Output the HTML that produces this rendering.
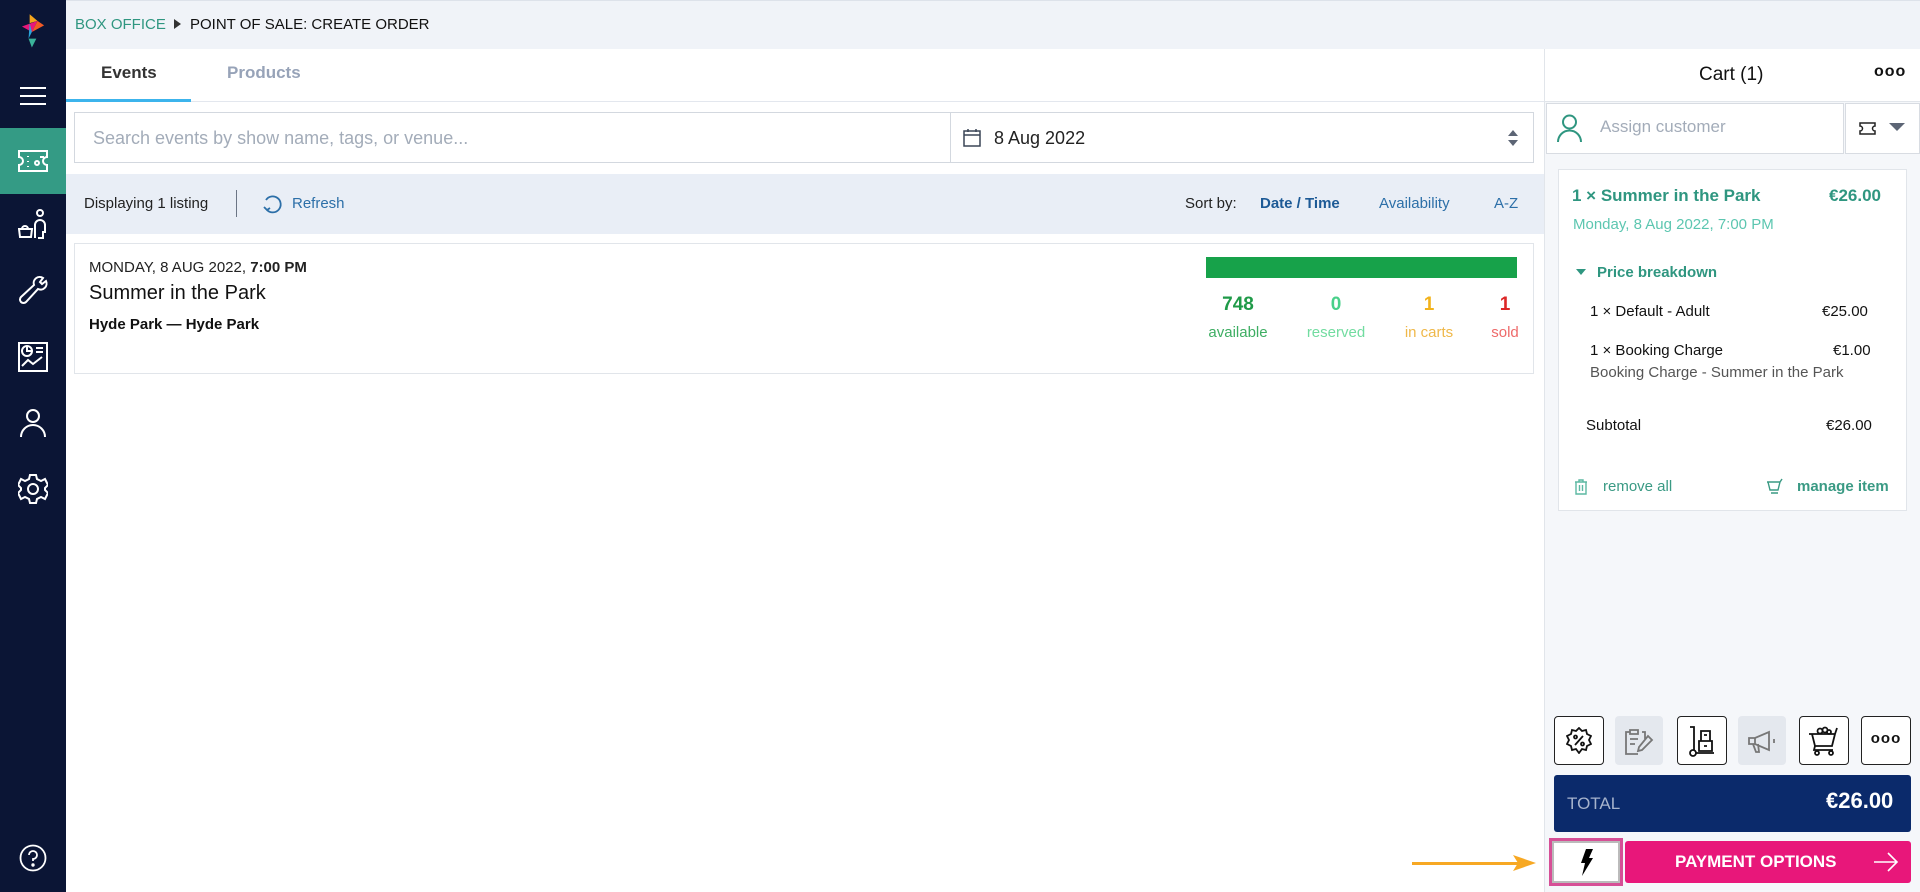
<!DOCTYPE html>
<html><head><meta charset="utf-8"><style>
*{box-sizing:border-box;margin:0;padding:0}
body{width:1920px;height:892px;overflow:hidden;font-family:"Liberation Sans",sans-serif;background:#fff;position:relative;color:#111}
.a{position:absolute}
.sb{left:0;top:0;width:66px;height:892px;background:#0b1535}
.ic{position:absolute;left:18px;width:30px;height:30px}
</style></head><body>
<div class="a sb">
  <svg class="a" style="left:18px;top:12px" width="30" height="40" viewBox="0 0 26 36"><path d="M10 2 L17 8 L10 10Z" fill="#f4a51c"/><path d="M3 13 L17 8 L12 18Z" fill="#e8177a"/><path d="M17 8 L23 12 L12 18Z" fill="#f25a26"/><path d="M10 10 L12 18 L9 24Z" fill="#29a4d9"/><path d="M9 24 L16 24 L12 32Z" fill="#3bb39a"/></svg>
  <svg class="ic" style="top:81px" viewBox="0 0 30 30" stroke="#fff" stroke-width="2"><path d="M2 7H28M2 15H28M2 23H28"/></svg>
  <div class="a" style="left:0;top:128px;width:66px;height:66px;background:#349b85"></div>
  <svg class="ic" style="top:146px" viewBox="0 0 30 30" fill="none" stroke="#fff" stroke-width="2"><path d="M1 5H29V11A4 4 0 0 0 29 19V25H1V19A4 4 0 0 0 1 11Z"/><circle cx="19" cy="17" r="2"/><path d="M10 10V11M10 15V16M10 20V21M22 11H26"/></svg>
  <svg class="ic" style="top:209px" viewBox="0 0 30 30" fill="none" stroke="#fff" stroke-width="2"><circle cx="22" cy="4" r="3"/><path d="M17 29V16A5 5 0 0 1 27 16V23H25V29H20"/><path d="M1 20H14L13 28H2Z M4 20 A3 3 0 0 1 10 20"/></svg>
  <svg class="ic" style="top:275px" viewBox="0 0 30 30" fill="none" stroke="#fff" stroke-width="2"><path d="M3 22 L16 10 A6 6 0 0 1 25 3 L22 7 L24 9 L28 6 A6 6 0 0 1 20 14 L8 27 A3.5 3.5 0 0 1 3 22Z"/></svg>
  <svg class="ic" style="top:342px" viewBox="0 0 30 30" fill="none" stroke="#fff" stroke-width="2"><rect x="1" y="1" width="28" height="28"/><circle cx="9" cy="9" r="5"/><path d="M9 4V9H14M18 6H25M18 10H25M4 24L10 18L15 22L24 15"/></svg>
  <svg class="ic" style="top:408px" viewBox="0 0 30 30" fill="none" stroke="#fff" stroke-width="2"><circle cx="15" cy="8" r="6"/><path d="M3 29A12 12 0 0 1 27 29"/></svg>
  <svg class="ic" style="top:474px" viewBox="0 0 30 30" fill="none" stroke="#fff" stroke-width="2"><circle cx="15" cy="15" r="5"/><path d="M12 1H18L19 5L23 7L27 5L30 11L27 14V16L30 19L27 25L23 23L19 25L18 29H12L11 25L7 23L3 25L0 19L3 16V14L0 11L3 5L7 7L11 5Z"/></svg>
  <svg class="a" style="left:19px;top:844px" width="28" height="28" viewBox="0 0 28 28" fill="none" stroke="#fff" stroke-width="1.8"><circle cx="14" cy="14" r="12.5"/><path d="M10 11A4 4 0 1 1 14 15V17"/><circle cx="14" cy="21" r=".8" fill="#fff"/></svg>
</div>
<div class="a" style="left:66px;top:0;width:1854px;height:49px;background:#f0f3f8;border-top:1px solid #dde2ea"></div>
<div class="a" style="left:75px;top:16px;font-size:15px;color:#2f9680">BOX OFFICE</div>
<div class="a" style="left:174px;top:19px;width:0;height:0;border-left:7px solid #333;border-top:5px solid transparent;border-bottom:5px solid transparent"></div>
<div class="a" style="left:190px;top:16px;font-size:15px;color:#111">POINT OF SALE: CREATE ORDER</div>
<div class="a" style="left:66px;top:101px;width:1478px;height:1px;background:#e3e7ee"></div>
<div class="a" style="left:101px;top:63px;font-size:17px;font-weight:bold;color:#333">Events</div>
<div class="a" style="left:227px;top:63px;font-size:17px;font-weight:bold;color:#97a3b8">Products</div>
<div class="a" style="left:66px;top:99px;width:125px;height:3px;background:#3cb4ec"></div>
<div class="a" style="left:74px;top:112px;width:876px;height:51px;border:1px solid #d3d8df;border-right:none"></div>
<div class="a" style="left:93px;top:128px;font-size:18px;color:#a3acb9">Search events by show name, tags, or venue...</div>
<div class="a" style="left:950px;top:112px;width:584px;height:51px;border:1px solid #d3d8df"></div>
<svg class="a" style="left:963px;top:128px" width="18" height="19" viewBox="0 0 18 19" fill="none" stroke="#3a4556" stroke-width="1.5"><rect x="1" y="3" width="16" height="15"/><path d="M1 7H17M5 1V4M13 1V4"/></svg>
<div class="a" style="left:994px;top:128px;font-size:18px;color:#222">8 Aug 2022</div>
<div class="a" style="left:1508px;top:130px;border-bottom:6px solid #5c6575;border-left:5px solid transparent;border-right:5px solid transparent"></div>
<div class="a" style="left:1508px;top:140px;border-top:6px solid #5c6575;border-left:5px solid transparent;border-right:5px solid transparent"></div>
<div class="a" style="left:66px;top:174px;width:1478px;height:60px;background:#e9eef6"></div>
<div class="a" style="left:84px;top:195px;font-size:15px;color:#222">Displaying 1 listing</div>
<div class="a" style="left:236px;top:190px;width:1px;height:27px;background:#6b7585"></div>
<svg class="a" style="left:263px;top:194px" width="20" height="20" viewBox="0 0 20 20" fill="none" stroke="#2c6fa8" stroke-width="1.8"><path d="M4 16A8 8 0 1 0 3 6"/><path d="M1 13L4 16L7 14"/></svg>
<div class="a" style="left:292px;top:195px;font-size:15px;color:#2c6fa8">Refresh</div>
<div class="a" style="left:1185px;top:195px;font-size:15px;color:#222">Sort by:</div>
<div class="a" style="left:1260px;top:195px;font-size:15px;color:#1d5a96;font-weight:bold">Date / Time</div>
<div class="a" style="left:1379px;top:195px;font-size:15px;color:#2c6fa8">Availability</div>
<div class="a" style="left:1494px;top:195px;font-size:15px;color:#2c6fa8">A-Z</div>
<div class="a" style="left:74px;top:243px;width:1460px;height:131px;border:1px solid #e1e5ea"></div>
<div class="a" style="left:89px;top:259px;font-size:15px;color:#222">MONDAY, 8 AUG 2022, <b>7:00 PM</b></div>
<div class="a" style="left:89px;top:282px;font-size:20px;color:#111">Summer in the Park</div>
<div class="a" style="left:89px;top:316px;font-size:15px;font-weight:bold;color:#111">Hyde Park — Hyde Park</div>
<div class="a" style="left:1206px;top:257px;width:311px;height:21px;background:#17a24a"></div>
<div class="a" style="left:1198px;top:294px;width:80px;text-align:center;font-size:19px;font-weight:bold;color:#1f9a48">748</div>
<div class="a" style="left:1198px;top:324px;width:80px;text-align:center;font-size:15px;color:#3eae63">available</div>
<div class="a" style="left:1296px;top:294px;width:80px;text-align:center;font-size:19px;font-weight:bold;color:#49d08a">0</div>
<div class="a" style="left:1296px;top:324px;width:80px;text-align:center;font-size:15px;color:#72dca0">reserved</div>
<div class="a" style="left:1389px;top:294px;width:80px;text-align:center;font-size:19px;font-weight:bold;color:#f2b21b">1</div>
<div class="a" style="left:1389px;top:324px;width:80px;text-align:center;font-size:15px;color:#efb84a">in carts</div>
<div class="a" style="left:1465px;top:294px;width:80px;text-align:center;font-size:19px;font-weight:bold;color:#dc2727">1</div>
<div class="a" style="left:1465px;top:324px;width:80px;text-align:center;font-size:15px;color:#ee6a6a">sold</div>
<div class="a" style="left:1544px;top:49px;width:376px;height:843px;background:#f5f7fa;border-left:1px solid #e1e5ea"></div>
<div class="a" style="left:1545px;top:49px;width:375px;height:53px;background:#fff;border-bottom:1px solid #e1e5ea"></div>
<div class="a" style="left:1699px;top:64px;font-size:19px;color:#111">Cart (1)</div>
<div class="a" style="left:1874px;top:63px;font-size:16px;letter-spacing:1px;font-weight:bold">ooo</div>
<div class="a" style="left:1546px;top:103px;width:298px;height:51px;background:#fff;border:1px solid #d8dce2"></div>
<svg class="a" style="left:1557px;top:114px" width="25" height="29" viewBox="0 0 25 29" fill="none" stroke="#2f9680" stroke-width="2"><circle cx="12.5" cy="8" r="6.5"/><path d="M1 28A11.5 11.5 0 0 1 24 28"/></svg>
<div class="a" style="left:1600px;top:117px;font-size:17px;color:#a3acb9">Assign customer</div>
<div class="a" style="left:1845px;top:103px;width:75px;height:51px;background:#fff;border:1px solid #d8dce2"></div>
<svg class="a" style="left:1859px;top:122px" width="17" height="13" viewBox="0 0 17 13" fill="none" stroke="#222" stroke-width="1.5"><path d="M1 1H16V4A2.5 2.5 0 0 0 16 9V12H1V9A2.5 2.5 0 0 0 1 4Z"/></svg>
<div class="a" style="left:1889px;top:123px;border-top:8px solid #5c6575;border-left:8px solid transparent;border-right:8px solid transparent"></div>
<div class="a" style="left:1558px;top:169px;width:349px;height:342px;background:#fff;border:1px solid #e1e5ea"></div>
<div class="a" style="left:1572px;top:186px;font-size:17px;font-weight:bold;color:#2f9680">1 × Summer in the Park</div>
<div class="a" style="left:1829px;top:186px;font-size:17px;font-weight:bold;color:#2f9680">€26.00</div>
<div class="a" style="left:1573px;top:216px;font-size:15px;color:#5cc6b0">Monday, 8 Aug 2022, 7:00 PM</div>
<div class="a" style="left:1576px;top:269px;border-top:6px solid #2f9680;border-left:5px solid transparent;border-right:5px solid transparent"></div>
<div class="a" style="left:1597px;top:264px;font-size:15px;font-weight:bold;color:#2f9680">Price breakdown</div>
<div class="a" style="left:1590px;top:303px;font-size:15px;color:#111">1 × Default - Adult</div>
<div class="a" style="left:1822px;top:303px;font-size:15px;color:#111">€25.00</div>
<div class="a" style="left:1590px;top:342px;font-size:15px;color:#111">1 × Booking Charge</div>
<div class="a" style="left:1833px;top:342px;font-size:15px;color:#111">€1.00</div>
<div class="a" style="left:1590px;top:364px;font-size:15px;color:#555">Booking Charge - Summer in the Park</div>
<div class="a" style="left:1586px;top:417px;font-size:15px;color:#111">Subtotal</div>
<div class="a" style="left:1826px;top:417px;font-size:15px;color:#111">€26.00</div>
<svg class="a" style="left:1574px;top:479px" width="14" height="16" viewBox="0 0 14 16" fill="none" stroke="#5cb8a2" stroke-width="1.4"><path d="M1 3H13M5 3V1H9V3M2 3V15H12V3M5.5 6V12M8.5 6V12"/></svg>
<div class="a" style="left:1603px;top:478px;font-size:15px;color:#3a9a84">remove all</div>
<svg class="a" style="left:1766px;top:478px" width="18" height="17" viewBox="0 0 18 17" fill="none" stroke="#3a9a84" stroke-width="1.4"><path d="M1 4H14L16 1M14 4L12 12H4L2 4M5 15H12"/></svg>
<div class="a" style="left:1797px;top:478px;font-size:15px;font-weight:bold;color:#3a9a84">manage item</div>
<div class="a" style="left:1554px;top:716px;width:50px;height:49px;background:#fff;border:1px solid #222;border-radius:4px"></div>
<svg class="a" style="left:1566px;top:727px" width="26" height="27" viewBox="0 0 26 27" fill="none" stroke="#111" stroke-width="1.8"><path d="M13 1L16 4L20 3L21 7L25 9L23 13L25 17L21 19L20 23L16 22L13 26L10 22L6 23L5 19L1 17L3 13L1 9L5 7L6 3L10 4Z"/><circle cx="9.5" cy="10" r="1.5"/><circle cx="16.5" cy="17" r="1.5"/><path d="M17 9L9 18"/></svg>
<div class="a" style="left:1615px;top:716px;width:48px;height:49px;background:#e4e8ee;border-radius:4px"></div>
<svg class="a" style="left:1624px;top:727px" width="30" height="28" viewBox="0 0 30 28" fill="none" stroke="#777" stroke-width="1.8"><path d="M18 5H21V12M14 27H2V5H6M6 3H14V7H6Z M6 12H14M6 17H11M24 9L28 13L18 23L14 24L15 20Z"/></svg>
<div class="a" style="left:1677px;top:716px;width:50px;height:49px;background:#fff;border:1px solid #222;border-radius:4px"></div>
<svg class="a" style="left:1688px;top:725px" width="28" height="32" viewBox="0 0 28 32" fill="none" stroke="#111" stroke-width="1.8"><path d="M2 2H6V25M8 28H26M13 6H22V16H13ZM11 16H24V26H11Z M16 10H19M16 21H19"/><circle cx="5" cy="28" r="3"/></svg>
<div class="a" style="left:1738px;top:716px;width:48px;height:49px;background:#e4e8ee;border-radius:4px"></div>
<svg class="a" style="left:1747px;top:730px" width="30" height="24" viewBox="0 0 30 24" fill="none" stroke="#777" stroke-width="1.8"><path d="M2 8H8L22 2V20L8 14H2Z M8 8V14M6 14L9 22H12L11 14M27 9V13"/></svg>
<div class="a" style="left:1799px;top:716px;width:50px;height:49px;background:#fff;border:1px solid #222;border-radius:4px"></div>
<svg class="a" style="left:1808px;top:725px" width="32" height="32" viewBox="0 0 32 32" fill="none" stroke="#111" stroke-width="1.8"><path d="M1 9H27L29 3M27 9L24 21H7L4 9M7 21L6 25H25"/><circle cx="9" cy="28" r="2"/><circle cx="23" cy="28" r="2"/><circle cx="12" cy="6" r="2.5"/><circle cx="17" cy="5" r="2.5"/><circle cx="21" cy="7" r="2"/></svg>
<div class="a" style="left:1861px;top:716px;width:50px;height:49px;background:#fff;border:1px solid #222;border-radius:4px"></div>
<div class="a" style="left:1861px;top:730px;width:50px;text-align:center;font-size:15px;font-weight:bold;letter-spacing:1px">ooo</div>
<div class="a" style="left:1554px;top:775px;width:357px;height:57px;background:#0b2a6b;border-radius:3px"></div>
<div class="a" style="left:1567px;top:794px;font-size:17px;color:#a6b3cc">TOTAL</div>
<div class="a" style="left:1826px;top:788px;font-size:22px;font-weight:bold;color:#fff">€26.00</div>
<div class="a" style="left:1549px;top:838px;width:74px;height:48px;background:#fff;border:3px solid #d64f96;box-shadow:inset 0 0 0 2px #bbb"></div>
<svg class="a" style="left:1580px;top:849px" width="14" height="27" viewBox="0 0 14 27"><path d="M6 0H13L9 9H13L2 27L5 14H1Z" fill="#000"/></svg>
<div class="a" style="left:1625px;top:841px;width:286px;height:42px;background:#e8177a;border-radius:3px"></div>
<div class="a" style="left:1675px;top:852px;font-size:17px;font-weight:bold;color:#fff">PAYMENT OPTIONS</div>
<svg class="a" style="left:1873px;top:851px" width="26" height="22" viewBox="0 0 26 22" fill="none" stroke="#fff" stroke-width="1.6"><path d="M1 11H24M15 2L24 11L15 20"/></svg>
<svg class="a" style="left:1410px;top:853px" width="130" height="20" viewBox="0 0 130 20"><path d="M2 10.5H110" stroke="#f7a823" stroke-width="3"/><path d="M103 2L126 10L103 18L108 10Z" fill="#f7a823"/></svg>
</body></html>
